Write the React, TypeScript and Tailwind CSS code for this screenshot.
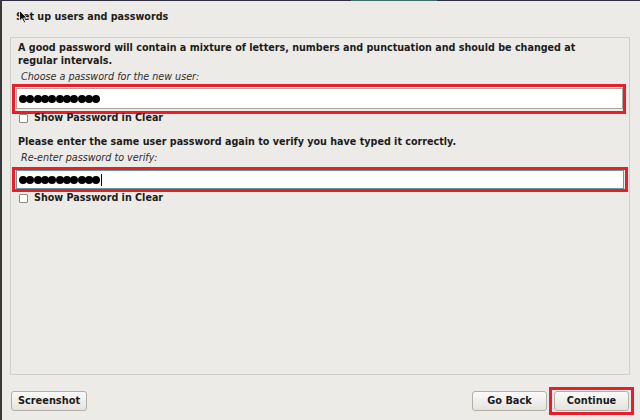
import React from 'react';

function Dots({ count }: { count: number }) {
  return (
    <div className="flex items-center">
      {Array.from({ length: count }).map((_, i) => (
        <span key={i} className="w-[8px] h-[8px] rounded-full bg-black -mr-[0.7px]" />
      ))}
    </div>
  );
}

function Checkbox({ label }: { label: string }) {
  return (
    <div className="flex items-center h-[10px] pl-[7px] gap-[6px]">
      <div className="w-[9px] h-[9px] bg-white border border-[#8e8b86] rounded-[1px]" />
      <span className="font-bold leading-[10px]">{label}</span>
    </div>
  );
}

function Button({ label, className = '' }: { label: string; className?: string }) {
  return (
    <button
      className={`h-[20px] w-[75px] rounded-[3px] border border-[#b3afa8] bg-gradient-to-b from-[#fbfaf9] to-[#e6e3de] font-bold text-[9.8px] text-[#1a1a1a] leading-none ${className}`}
    >
      {label}
    </button>
  );
}

export default function App() {
  return (
    <div className="relative w-[640px] h-[420px] bg-[#edebe7] border-l-2 border-[#3a3939] flex flex-col font-['DejaVu_Sans',sans-serif] text-[9.6px] text-[#1c1c1c] overflow-hidden">
      {/* top edge of the window behind */}
      <div className="absolute top-0 left-0 right-0 h-px bg-[#2f2d40]" />
      <div className="absolute top-0 left-[349px] w-[86px] h-px bg-[#3f6e68]" />

      {/* mouse pointer */}
      <svg className="absolute left-[17px] top-[10px]" width="9" height="14" viewBox="0 0 9 14">
        <path d="M0.5 0.5 L0.5 11 L3 8.6 L5 13 L6.6 12.3 L4.7 8 L8 8 Z" fill="#111" stroke="#fff" strokeWidth="0.8" />
      </svg>

      <div className="pt-[10px] pl-[14px] h-[37px] font-bold leading-[13px]">Set up users and passwords</div>

      <div className="ml-[8px] w-[620px] h-[338px] border border-[#d2cfca] px-px pt-[3px] flex flex-col">
        <p className="pl-[6px] font-bold leading-[13px] pr-[40px]">
          A good password will contain a mixture of letters, numbers and punctuation and should be changed at regular intervals.
        </p>
        <p className="pl-[9px] mt-[3px] italic text-[#2e2e2e] leading-[13px]">Choose a password for the new user:</p>

        <div className="mt-px w-[614px] border-[3px] border-[#e91e2b] pl-px pr-0 pt-px pb-[2px]">
          <div className="h-[21px] bg-white border border-[#aaa69f] flex items-center pl-[2px]">
            <Dots count={11} />
          </div>
        </div>
        <div className="-mt-px">
          <Checkbox label="Show Password in Clear" />
        </div>

        <p className="pl-[6px] mt-[12px] font-bold leading-[13px]">
          Please enter the same user password again to verify you have typed it correctly.
        </p>
        <p className="pl-[9px] mt-[3px] italic text-[#2e2e2e] leading-[13px]">Re-enter password to verify:</p>

        <div className="mt-[3px] w-[616px] border-[3px] border-[#e91e2b] pl-px pr-px">
          <div className="h-[19px] bg-white border border-[#5e9f9b] flex items-center pl-[2px]">
            <Dots count={11} />
            <span className="ml-[2px] w-px h-[12px] bg-black" />
          </div>
        </div>
        <div className="mt-px">
          <Checkbox label="Show Password in Clear" />
        </div>
      </div>

      <div className="mt-[12px] h-[27px] flex items-center">
        <Button label="Screenshot" className="ml-[9px] w-[76px]" />
        <div className="flex-1" />
        <Button label="Go Back" />
        <div className="ml-[2px] mr-[6px] border-[3px] border-[#e91e2b] px-[2px] py-px">
          <Button label="Continue" />
        </div>
      </div>
    </div>
  );
}
